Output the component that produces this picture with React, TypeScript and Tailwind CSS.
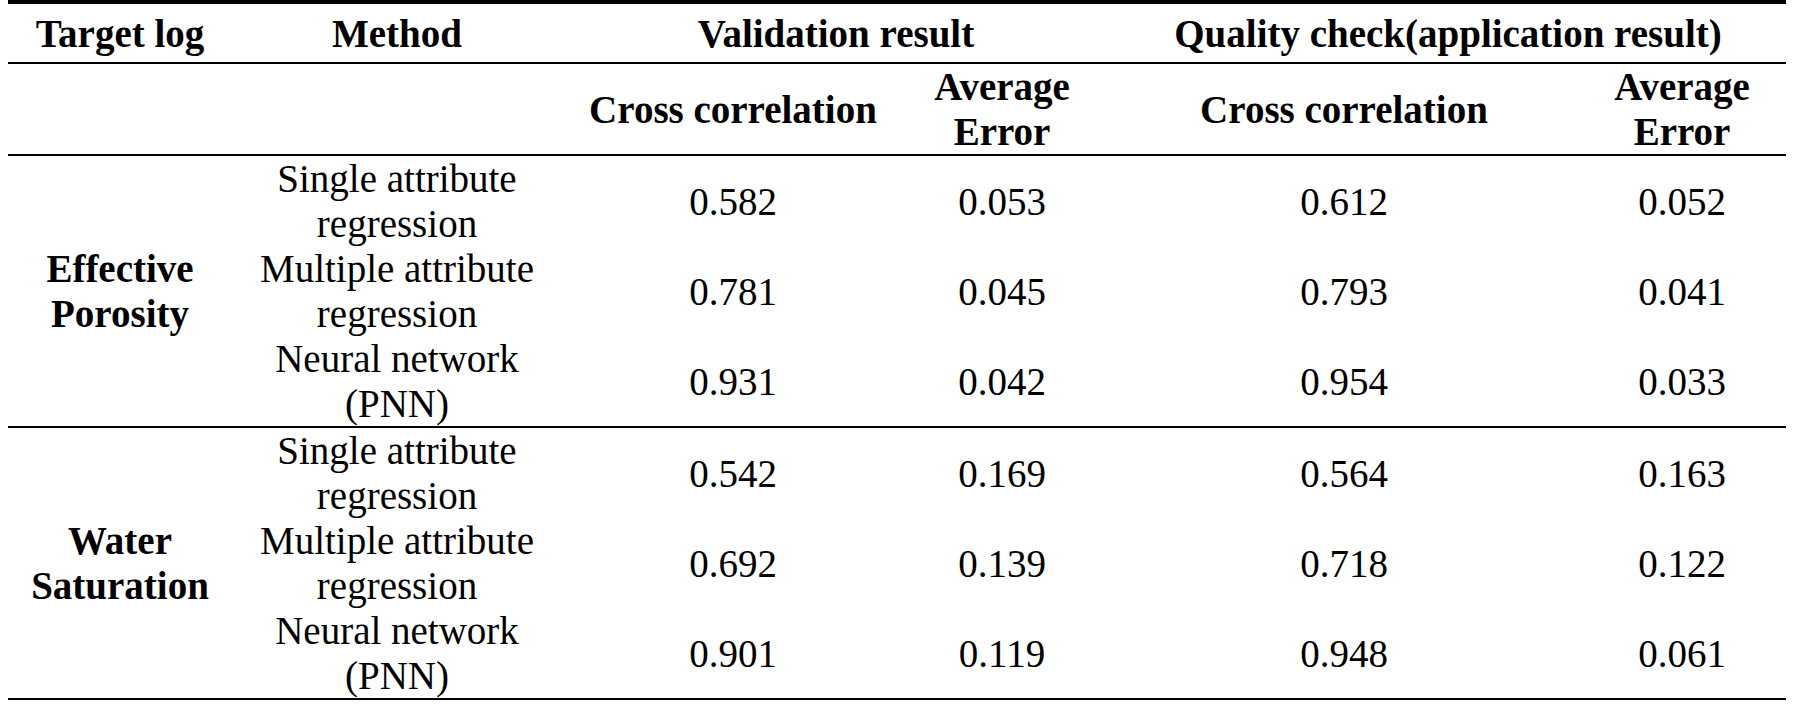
import React from "react";

const groups = [
  {
    label: ["Effective", "Porosity"],
    rows: [
      { m: ["Single attribute", "regression"], v: ["0.582", "0.053", "0.612", "0.052"] },
      { m: ["Multiple attribute", "regression"], v: ["0.781", "0.045", "0.793", "0.041"] },
      { m: ["Neural network", "(PNN)"], v: ["0.931", "0.042", "0.954", "0.033"] },
    ],
  },
  {
    label: ["Water", "Saturation"],
    rows: [
      { m: ["Single attribute", "regression"], v: ["0.542", "0.169", "0.564", "0.163"] },
      { m: ["Multiple attribute", "regression"], v: ["0.692", "0.139", "0.718", "0.122"] },
      { m: ["Neural network", "(PNN)"], v: ["0.901", "0.119", "0.948", "0.061"] },
    ],
  },
];

export default function App() {
  return (
    <div className="w-[1793px] h-[708px] bg-white text-black font-['Liberation_Serif',serif] text-[39px] leading-[45px]">
      <div className="ml-2 w-[1778px] border-t-4 border-black">
        {/* header row 1 */}
        <div className="grid grid-cols-[224px_330px_548px_676px] h-[60px] items-center border-b-2 border-black font-bold text-center">
          <div>Target log</div>
          <div>Method</div>
          <div>Validation result</div>
          <div>Quality check(application result)</div>
        </div>
        {/* header row 2 */}
        <div className="grid grid-cols-[224px_330px_342px_196px_488px_198px] h-[92px] items-center border-b-2 border-black font-bold text-center">
          <div />
          <div />
          <div>Cross correlation</div>
          <div>
            Average
            <br />
            Error
          </div>
          <div>Cross correlation</div>
          <div className="pr-[10px]">
            Average
            <br />
            Error
          </div>
        </div>
        {groups.map((g, gi) => (
          <div key={gi} className="grid grid-cols-[224px_1554px] border-b-2 border-black">
            <div className="flex flex-col items-center justify-center font-bold text-center">
              <div>{g.label[0]}</div>
              <div>{g.label[1]}</div>
            </div>
            <div className="flex flex-col">
              {g.rows.map((r, ri) => (
                <div key={ri} className="grid grid-cols-[330px_342px_196px_488px_198px] h-[90px] items-center text-center">
                  <div>
                    {r.m[0]}
                    <br />
                    {r.m[1]}
                  </div>
                  <div>{r.v[0]}</div>
                  <div>{r.v[1]}</div>
                  <div>{r.v[2]}</div>
                  <div className="pr-[10px]">{r.v[3]}</div>
                </div>
              ))}
            </div>
          </div>
        ))}
      </div>
    </div>
  );
}
